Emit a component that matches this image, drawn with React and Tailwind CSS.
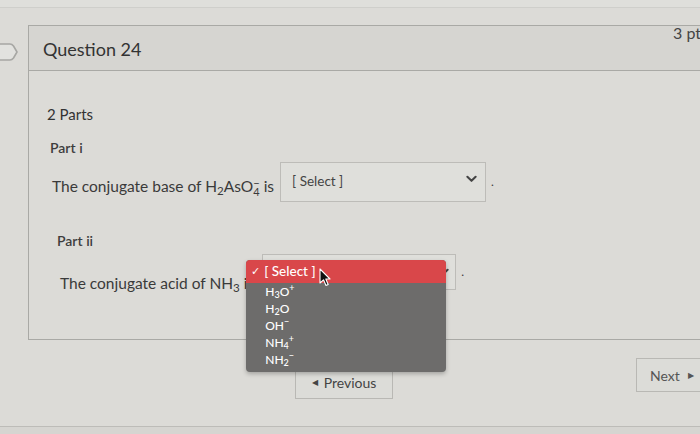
import React from "react";

function Chevron({ className = "" }) {
  return (
    <svg viewBox="0 0 12 8" className={className} width="11" height="8">
      <path d="M1.5 1.5 L6 6 L10.5 1.5" fill="none" stroke="#444" strokeWidth="2.2" strokeLinecap="round" strokeLinejoin="round" />
    </svg>
  );
}

function Cursor() {
  return (
    <svg viewBox="0 0 12 19" width="12" height="19">
      <path d="M1 1 L1 15 L4.5 11.8 L7 17.5 L9.2 16.5 L6.8 11 L11 11 Z" fill="#111" stroke="#fff" strokeWidth="1.1" strokeLinejoin="round" />
    </svg>
  );
}

function Flag() {
  return (
    <svg viewBox="0 0 30 20" width="30" height="20">
      <path d="M-4 2 L20 2 Q22 2 23.5 4 L27 10 L23.5 16 Q22 18 20 18 L-4 18" fill="#e2e2df" stroke="#a7a7a4" strokeWidth="1.6" strokeLinejoin="round" />
    </svg>
  );
}

export default function App() {
  const options = [
    <>H<sub>3</sub>O<sup>+</sup></>,
    <>H<sub>2</sub>O</>,
    <>OH<sup>−</sup></>,
    <>NH<sub>4</sub><sup>+</sup></>,
    <>NH<sub>2</sub><sup>−</sup></>,
  ];
  return (
    <div className="w-[700px] h-[434px] overflow-hidden bg-[#dcdbd7] text-[#3a3a3a] flex flex-col" style={{ fontFamily: "Lato, 'Open Sans', sans-serif" }}>
      <div className="h-[8px] border-b border-[#cfcfcb] bg-[#dfdfdb]" />
      <div className="flex mt-[17px]">
        <div className="w-[32px] shrink-0 pt-[17px] -ml-[10px] mr-[6px]">
          <Flag />
        </div>
        <div className="flex-1 border-l border-t border-b border-[#a9a9a5] h-[315px] flex flex-col">
          <div className="h-[45px] bg-[#d6d5d1] border-b border-[#a9a9a5] flex items-center justify-between pl-[14px]">
            <span className="text-[18px] text-[#333] mt-[2px]">Question 24</span>
            <span className="text-[16px] text-[#444] -mr-[8px] -mt-[30px]">3 pts</span>
          </div>
          <div className="flex flex-col pl-[18px]">
            <div className="mt-[33px] text-[15px] leading-[20px] text-[#333]">2 Parts</div>
            <div className="mt-[14px] pl-[3px] text-[14px] leading-[20px] font-semibold text-[#3d3d3d]">Part i</div>
            <div className="mt-[4px] pl-[5px] flex items-center">
              <span className="text-[15.5px] mt-[10px] whitespace-nowrap">
                The conjugate base of H<sub>2</sub>AsO
                <span className="inline-flex flex-col text-[11px] leading-[9px] align-[5px] mr-[4px]">
                  <span>−</span>
                  <span>4</span>
                </span>
                is
              </span>
              <div className="ml-[6px] w-[206px] h-[40px] border border-[#bdbcb8] bg-[#dfdfdb] flex items-center justify-between pl-[11px] pr-[8px]">
                <span className="text-[13.5px] text-[#444] mt-[-2px]">[ Select ]</span>
                <Chevron className="mt-[-6px]" />
              </div>
              <span className="ml-[5px] text-[12px]">.</span>
            </div>
            <div className="mt-[29px] pl-[10px] text-[14px] leading-[20px] font-semibold text-[#3d3d3d]">Part ii</div>
            <div className="mt-[-3px] pl-[13px] flex items-center">
              <span className="text-[15.5px] mt-[24px] whitespace-nowrap">
                The conjugate acid of NH<sub>3</sub> is
              </span>
              <div className="relative ml-[8px] w-[194px] h-[36px] border border-[#bdbcb8] bg-[#dfdfdb] flex items-center justify-end pr-[6px]">
                <Chevron />
                <div className="absolute left-[-17px] top-[5px] w-[200px] rounded-[4px] overflow-hidden bg-[#6d6c6b] shadow-[0_2px_4px_rgba(0,0,0,0.25)] pb-[4px]">
                  <div className="h-[23px] bg-[#d9474a] flex items-center pl-[5px] text-white text-[13.5px] font-medium">
                    <span className="text-[11px] mr-[4px]">✓</span>
                    <span>[ Select ]</span>
                  </div>
                  <div className="flex flex-col pl-[19px] text-white text-[12px] font-medium leading-[17px] pt-[0px]">
                    {options.map((o, i) => (
                      <div key={i}>{o}</div>
                    ))}
                  </div>
                  <div className="absolute left-[73px] top-[8px]">
                    <Cursor />
                  </div>
                </div>
              </div>
              <span className="ml-[5px] text-[12px]">.</span>
            </div>
          </div>
        </div>
      </div>
      <div className="flex items-start mt-[24px] h-[48px]">
        <button className="ml-[295px] mt-[1px] w-[98px] h-[34px] border border-[#b9b8b4] bg-[#dcdcd8] flex items-center justify-center gap-[6px] text-[14px] text-[#444]">
          <span className="text-[8px]">◀</span>
          <span>Previous</span>
        </button>
        <button className="ml-auto -mr-[10px] mt-[-6px] w-[74px] h-[34px] border border-[#b9b8b4] bg-[#dcdcd8] flex items-center pl-[13px] gap-[8px] text-[14px] text-[#555]">
          <span>Next</span>
          <span className="text-[8px]">▶</span>
        </button>
      </div>
      <div className="mt-[14px] flex-1 border-t border-[#bdbcb8] bg-[#d6d5d1]" />
    </div>
  );
}
